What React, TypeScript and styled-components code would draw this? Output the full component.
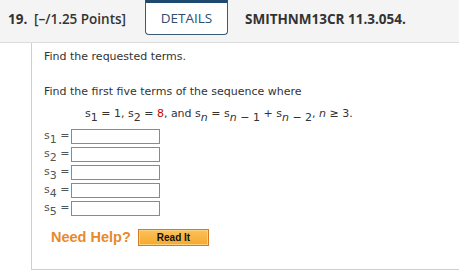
import React from "react";
import styled, { createGlobalStyle } from "styled-components";

const Global = createGlobalStyle`
  html, body { margin: 0; padding: 0; background: #fff; }
  body { width: 459px; height: 280px; overflow: hidden; }
`;

const Page = styled.div`
  width: 459px;
`;

const Header = styled.div`
  display: flex;
  align-items: flex-start;
  height: 42px;
  background: #f4f4f4;
  border-bottom: 1px solid #dcdcdc;
  font-family: "Open Sans", sans-serif;
  font-size: 13.5px;
  line-height: 20px;
  color: #333;
  & > * { flex-shrink: 0; }
`;

const Num = styled.span`
  font-weight: 700;
  margin: 9px 0 0 8px;
  width: 26px;
`;

const Points = styled.span`
  font-weight: 600;
  margin-top: 9px;
  width: 111px;
  white-space: nowrap;
`;

const DetailsButton = styled.div`
  box-sizing: border-box;
  width: 83px;
  height: 35px;
  border: 1px solid #3b5a78;
  border-top: 3px solid #1e4a72;
  border-radius: 0 0 4px 4px;
  background: #fff;
  color: #2d4f6e;
  display: flex;
  align-items: center;
  justify-content: center;
  padding-bottom: 2px;
  font-size: 13.5px;
`;

const Title = styled.span`
  font-weight: 700;
  margin: 9px 0 0 17px;
  white-space: nowrap;
`;

const Body = styled.div`
  margin-left: 31px;
  border-left: 1px solid #cfcfcf;
  border-bottom: 1px solid #cfcfcf;
  padding: 7px 0 23px 12px;
  font-family: "DejaVu Sans", Verdana, sans-serif;
  font-size: 11px;
  color: #333;
  line-height: 13px;
`;

const Para = styled.p<{ $top?: number }>`
  margin: ${(p) => p.$top ?? 0}px 0 0 0;
`;

const MathLine = styled.div`
  margin: 9px 0 0 41px;
  white-space: nowrap;
`;

const Sub = styled.sub`
  font-size: 11px;
  vertical-align: -4px;
  line-height: 0;
`;

const It = styled.i``;

const Red = styled.span`
  color: #cc0000;
`;

const Terms = styled.div`
  margin-top: 9px;
  display: flex;
  flex-direction: column;
  gap: 3px;
`;

const TermRow = styled.div`
  display: flex;
  align-items: center;
  height: 15px;
`;

const TermLabel = styled.span`
  width: 27px;
  color: #555;
  white-space: nowrap;
  position: relative;
  top: -1px;
`;

const TermInput = styled.div`
  box-sizing: border-box;
  width: 89px;
  height: 15px;
  border: 1px solid #8a8a8a;
  background: #fff;
`;

const HelpRow = styled.div`
  display: flex;
  align-items: center;
  margin: 13px 0 0 7px;
`;

const NeedHelp = styled.span`
  font-family: "Liberation Sans", Arial, sans-serif;
  font-weight: 700;
  font-size: 14.5px;
  color: #e8892b;
  width: 87px;
`;

const ReadIt = styled.div`
  box-sizing: border-box;
  width: 71px;
  height: 17px;
  border: 1px solid #d47a22;
  background: linear-gradient(#fbc15a, #f6a92e);
  box-shadow: inset 0 0 0 1px #fdd27e;
  display: flex;
  align-items: center;
  justify-content: center;
  font-family: "Liberation Sans", Arial, sans-serif;
  font-weight: 700;
  font-size: 10px;
  color: #111;
`;

const terms = [1, 2, 3, 4, 5];

export default function App() {
  return (
    <Page>
      <Global />
      <Header>
        <Num>19.</Num>
        <Points>[–/1.25 Points]</Points>
        <DetailsButton>DETAILS</DetailsButton>
        <Title>SMITHNM13CR 11.3.054.</Title>
      </Header>
      <Body>
        <Para>Find the requested terms.</Para>
        <Para $top={22}>Find the first five terms of the sequence where</Para>
        <MathLine>
          s<Sub>1</Sub> = 1, s<Sub>2</Sub> = <Red>8</Red>, and s<Sub><It>n</It></Sub> = s
          <Sub>
            <It>n</It> − 1
          </Sub>{" "}
          + s
          <Sub>
            <It>n</It> − 2
          </Sub>
          , <It>n</It> ≥ 3.
        </MathLine>
        <Terms>
          {terms.map((t) => (
            <TermRow key={t}>
              <TermLabel>
                s<Sub>{t}</Sub> =
              </TermLabel>
              <TermInput />
            </TermRow>
          ))}
        </Terms>
        <HelpRow>
          <NeedHelp>Need Help?</NeedHelp>
          <ReadIt>Read It</ReadIt>
        </HelpRow>
      </Body>
    </Page>
  );
}
